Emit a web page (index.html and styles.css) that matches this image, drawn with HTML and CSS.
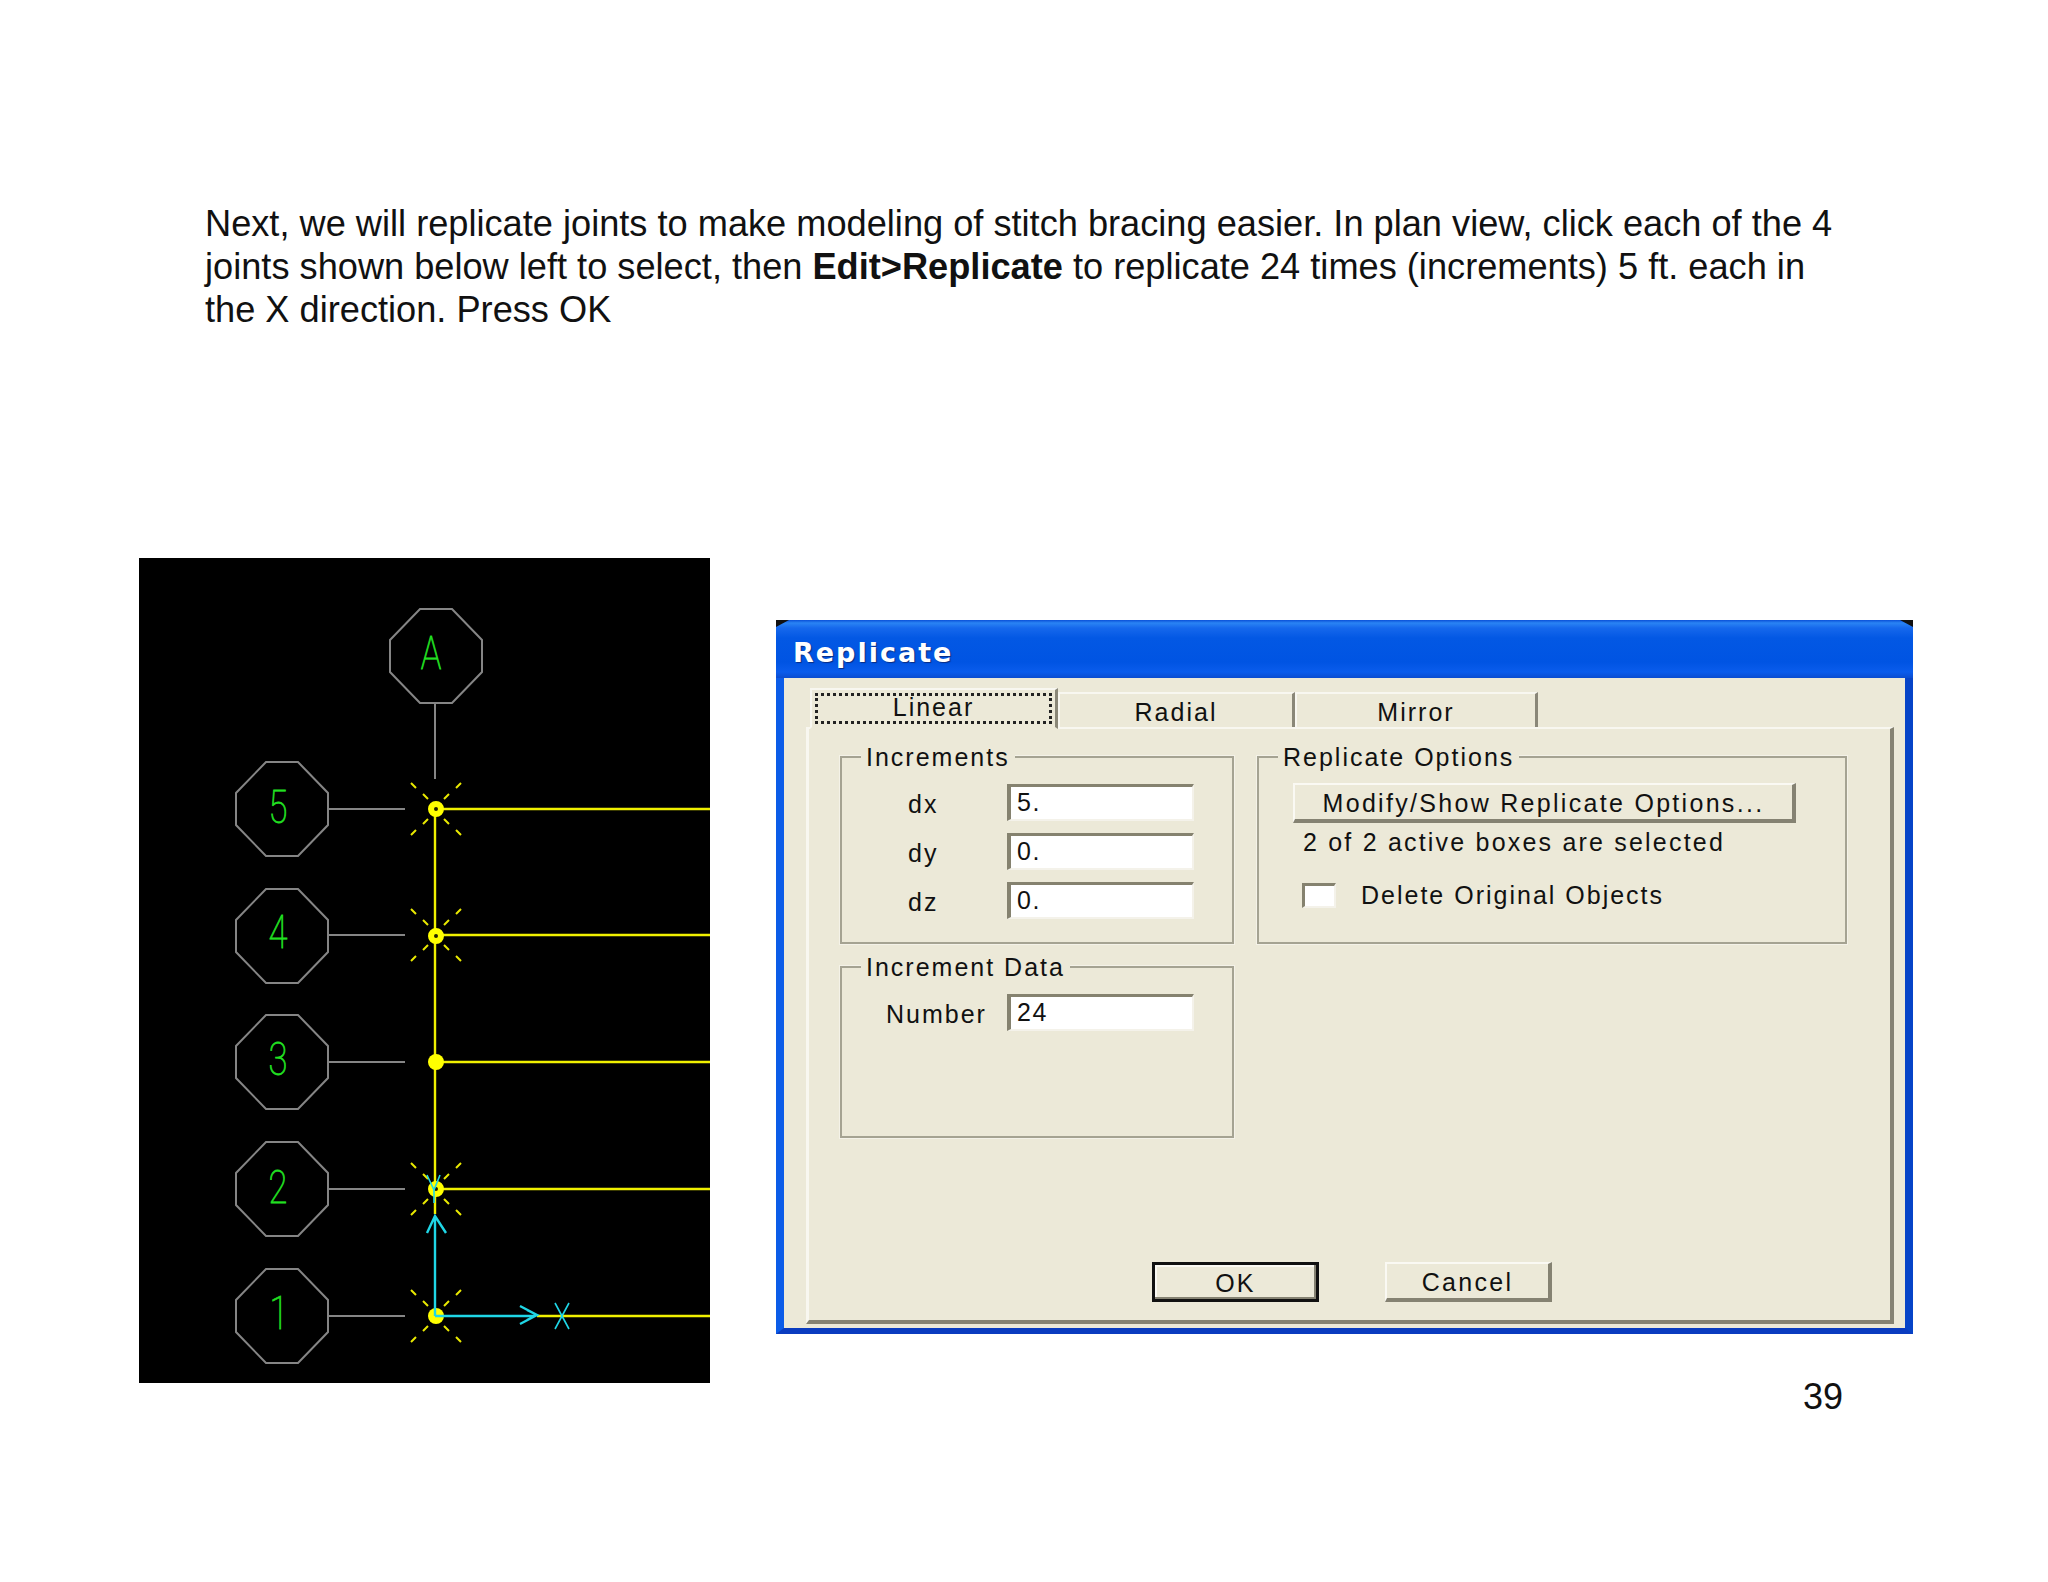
FILE: index.html
```html
<!DOCTYPE html>
<html lang="en">
<head>
    <meta charset="UTF-8">
    <meta name="viewport" content="width=device-width, initial-scale=1.0">
    <title>Replicate joints - 39</title>
    <link rel="stylesheet" href="styles.css">
</head>
<body>
    <p class="intro">Next, we will replicate joints to make modeling of stitch bracing easier. In plan view, click each of the 4<br>joints shown below left to select, then <strong>Edit&gt;Replicate</strong> to replicate 24 times (increments) 5 ft. each in<br>the X direction. Press OK</p>

    <div class="figures">
        <!-- plan view -->
        <svg class="plan" width="571" height="825" viewBox="0 0 571 825">
            <defs>
                <polygon id="bubble" class="grid-line" points="-16,-47 16,-47 46,-16 46,16 16,47 -16,47 -46,16 -46,-16"/>
                <g id="sparks" class="spark">
                    <path d="M-25-26l5 5M-13-15l5 5M25-26l-5 5M13-15l-5 5M-25 26l5-5M-13 15l5-5M25 26l-5-5M13 15l-5-5"/>
                </g>
            </defs>

            <path class="grid-line" d="M296 146V221M190 251H266M190 377H266M190 504H266M190 631H266M190 758H266"/>
            <use href="#bubble" x="297" y="98"/>
            <use href="#bubble" x="143" y="251"/>
            <use href="#bubble" x="143" y="378"/>
            <use href="#bubble" x="143" y="504"/>
            <use href="#bubble" x="143" y="631"/>
            <use href="#bubble" x="143" y="758"/>

            <text class="bubble-label" transform="translate(292 111) scale(.75 1)">A</text>
            <text class="bubble-label" transform="translate(139 265) scale(.75 1)">5</text>
            <text class="bubble-label" transform="translate(139 390) scale(.75 1)">4</text>
            <text class="bubble-label" transform="translate(139 517) scale(.75 1)">3</text>
            <text class="bubble-label" transform="translate(139 645) scale(.75 1)">2</text>
            <text class="bubble-label" transform="translate(140 771) scale(.75 1)">1</text>

            <path class="beam" d="M296 251V656M296 251H571M296 377H571M296 504H571M296 631H571M398 758H571"/>

            <use href="#sparks" x="297" y="251"/>
            <use href="#sparks" x="297" y="377"/>
            <use href="#sparks" x="297" y="631"/>
            <use href="#sparks" x="297" y="758"/>
            <circle class="joint-ring" cx="297" cy="251" r="5"/>
            <circle class="joint-ring" cx="297" cy="378" r="5"/>
            <circle class="joint-solid" cx="297" cy="504" r="8"/>
            <circle class="joint-ring" cx="297" cy="631" r="5"/>
            <circle class="joint-solid" cx="297" cy="758" r="8"/>

            <path class="axis" d="M296 758V660M296 758H396M288 675L296 658L307 675M381 748L398 757L381 766M388 752L398 757L388 762"/>
            <path class="axis-thin" d="M288 617L295 632L301 617M295 632V645M416 745L430 771M430 745L416 771"/>
        </svg>

        <div class="right-col">
            <div class="dialog">
                <div class="title-bar">Replicate</div>
                <div class="dialog-body">
                    <div class="tabs">
                        <div class="tab active"><span class="focus">Linear</span></div>
                        <div class="tab">Radial</div>
                        <div class="tab mirror">Mirror</div>
                    </div>
                    <div class="tab-panel">
                        <div class="groups">
                            <div class="group">
                                <span class="group-title">Increments</span>
                                <div class="field">
                                    <label class="field-label">dx</label>
                                    <input class="text-input" type="text" value="5." readonly>
                                </div>
                                <div class="field">
                                    <label class="field-label">dy</label>
                                    <input class="text-input" type="text" value="0." readonly>
                                </div>
                                <div class="field">
                                    <label class="field-label">dz</label>
                                    <input class="text-input" type="text" value="0." readonly>
                                </div>
                            </div>

                            <div class="group options">
                                <span class="group-title">Replicate Options</span>
                                <button class="win-button wide">Modify/Show Replicate Options...</button>
                                <div class="status">2 of 2 active boxes are selected</div>
                                <div class="check-row">
                                    <span class="check-box"></span>
                                    <span>Delete Original Objects</span>
                                </div>
                            </div>

                            <div class="group data">
                                <span class="group-title">Increment Data</span>
                                <div class="field">
                                    <label class="field-label number">Number</label>
                                    <input class="text-input" type="text" value="24" readonly>
                                </div>
                            </div>
                        </div>

                        <div class="actions">
                            <button class="win-button default">OK</button>
                            <button class="win-button">Cancel</button>
                        </div>
                    </div>
                </div>
            </div>
            <div class="page-number">39</div>
        </div>
    </div>
</body>
</html>
```

FILE: styles.css
```css
* {
    box-sizing: border-box;
}

body {
    margin: 0;
    background-color: #fff;
    font-family: "Liberation Sans", Arial, sans-serif;
    color: #111;
}

.intro {
    margin: 202px 0 0 205px;
    font-size: 36.2px;
    line-height: 43px;
    white-space: nowrap;
}

.figures {
    display: flex;
    align-items: flex-start;
    gap: 66px;
    margin-top: 227px;
    padding-left: 139px;
}

/* plan view */
.plan {
    display: block;
    flex: none;
    background-color: #000;
}

.grid-line {
    fill: none;
    stroke: #858585;
    stroke-width: 2;
}

.beam {
    fill: none;
    stroke: #f0f000;
    stroke-width: 2.4;
}

.spark path {
    fill: none;
    stroke: #e8e800;
    stroke-width: 2;
}

.joint-ring {
    fill: #222200;
    stroke: #ffff00;
    stroke-width: 6;
}

.joint-solid {
    fill: #ffff00;
}

.axis {
    fill: none;
    stroke: #1fd6e6;
    stroke-width: 2.4;
}

.axis-thin {
    fill: none;
    stroke: #1fd6e6;
    stroke-width: 1.6;
}

.bubble-label {
    font-family: Roboto, "Liberation Sans", sans-serif;
    font-size: 46px;
    font-weight: 100;
    fill: #22e022;
    stroke: #22e022;
    stroke-width: .8;
    text-anchor: middle;
}

/* dialog */
.right-col {
    width: 1137px;
    flex: none;
    padding-top: 62px;
}

.dialog {
    position: relative;
    width: 1137px;
    height: 714px;
    border-left: 8px solid #0b5ce8;
    border-right: 8px solid #0644c8;
    border-bottom: 6px solid #0a3cc0;
    font-size: 25px;
    letter-spacing: 2px;
}

.dialog::before,
.dialog::after {
    content: "";
    position: absolute;
    top: 0;
    width: 0;
    height: 0;
    border-top: 7px solid #111;
}

.dialog::before {
    left: -8px;
    border-right: 13px solid transparent;
}

.dialog::after {
    right: -8px;
    border-left: 13px solid transparent;
}

.title-bar {
    height: 58px;
    margin: 0 -8px;
    padding: 18px 0 0 17px;
    background: linear-gradient(#0a50d8 0, #2a84f4 3px, #1668ec 8px, #0358e4 18px, #0054e3 42px, #0a5cec 52px, #0a4cd0 58px);
    color: #fff;
    font-family: "DejaVu Sans", sans-serif;
    font-size: 27px;
    font-weight: bold;
    line-height: 30px;
    letter-spacing: 2px;
    text-shadow: 1px 1px 1px #0a2c80;
}

.dialog-body {
    height: 650px;
    padding: 10px 11px 4px 22px;
    background-color: #ece9d8;
}

.tabs {
    display: flex;
    align-items: flex-end;
    height: 39px;
    padding-left: 4px;
}

.tab {
    display: flex;
    align-items: center;
    justify-content: center;
    width: 237px;
    height: 35px;
    padding-top: 3px;
    background-color: #ece9d8;
    border-top: 2px solid #f8f7f0;
    border-left: 2px solid #f8f7f0;
    border-right: 3px solid #8a8778;
}

.tab.mirror {
    width: 243px;
}

.tab.active {
    position: relative;
    z-index: 1;
    width: 248px;
    height: 41px;
    margin-bottom: -2px;
    padding: 3px 3px 3px 3px;
    border-bottom: 2px solid #ece9d8;
}

.focus {
    display: block;
    width: 100%;
    height: 100%;
    border: 3px dotted #222;
    line-height: 23px;
    text-align: center;
}

.tab-panel {
    height: 597px;
    padding: 27px 0 0 31px;
    background-color: #ece9d8;
    border-top: 2px solid #f8f7f0;
    border-left: 3px solid #f8f7f0;
    border-right: 4px solid #858272;
    border-bottom: 4px solid #858272;
}

.groups {
    display: grid;
    grid-template-columns: 394px 590px;
    grid-template-rows: 188px 172px;
    gap: 22px 23px;
}

.group {
    position: relative;
    padding-top: 26px;
    border: 2px solid #a5a392;
    box-shadow: 0 0 0 1px #f4f2e8;
}

.group-title {
    position: absolute;
    top: -16px;
    left: 19px;
    padding: 0 5px;
    background-color: #ece9d8;
    line-height: 30px;
}

.options {
    padding-top: 25px;
    padding-left: 34px;
    grid-row: 1;
    grid-column: 2;
}

.data {
    grid-column: 1;
    grid-row: 2;
}

.field {
    display: flex;
    align-items: center;
    height: 37px;
    margin-bottom: 12px;
}

.field-label {
    width: 165px;
    padding-left: 66px;
    padding-top: 4px;
}

.field-label.number {
    padding-left: 44px;
}

.text-input {
    width: 187px;
    height: 37px;
    padding: 0 0 2px 6px;
    background-color: #fff;
    border-style: solid;
    border-width: 3px 2px 2px 4px;
    border-color: #85826f #f4f2ea #f4f2ea #85826f;
    outline: none;
    font-family: inherit;
    font-size: 25px;
    letter-spacing: 1.5px;
    color: #111;
}

.win-button {
    height: 40px;
    padding: 2px 0 0;
    background-color: #ece9d8;
    border-style: solid;
    border-width: 2px 4px 4px 2px;
    border-color: #faf9f3 #858272 #858272 #faf9f3;
    font-family: inherit;
    font-size: 25px;
    letter-spacing: 2.3px;
    color: #111;
}

.win-button.wide {
    display: block;
    width: 503px;
}

.status {
    margin: 4px 0 0 10px;
    line-height: 30px;
    letter-spacing: 2.2px;
}

.check-row {
    display: flex;
    align-items: center;
    gap: 25px;
    margin: 24px 0 0 9px;
}

.check-box {
    width: 34px;
    height: 25px;
    background-color: #fff;
    border-style: solid;
    border-width: 3px 2px 2px 3px;
    border-color: #85826f #f4f2ea #f4f2ea #85826f;
}

.actions {
    display: flex;
    gap: 66px;
    margin-top: 124px;
    padding-left: 312px;
}

.actions .win-button {
    width: 167px;
}

.win-button.default {
    border: 3px solid #111;
    box-shadow: inset -2px -2px 0 #858272, inset 2px 2px 0 #faf9f3;
}

.page-number {
    margin-top: 41px;
    padding-right: 70px;
    font-size: 36px;
    line-height: 43px;
    text-align: right;
}
```
